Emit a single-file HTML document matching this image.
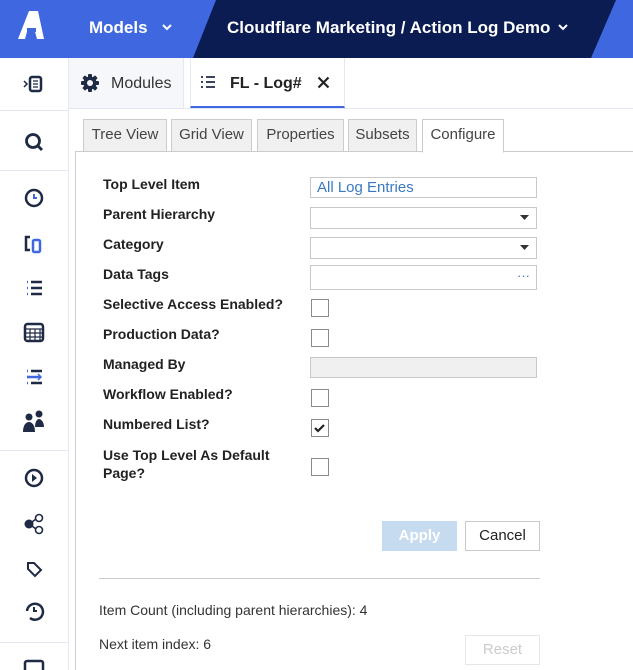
<!DOCTYPE html>
<html><head><style>
*{box-sizing:border-box;margin:0;padding:0}
body{width:633px;height:670px;overflow:hidden;background:#fff;font-family:"Liberation Sans",Arial,sans-serif;position:relative}
.abs{position:absolute}
.hdr{left:0;top:0;width:633px;height:58px;background:#3f68e0}
.lbl{position:absolute;left:103px;font-weight:bold;font-size:14px;color:#222}
.inp{position:absolute;left:310px;width:227px;height:22px;border:1px solid #c8c8c8;background:#fff}
.cb{position:absolute;left:311px;width:18px;height:18px;border:1px solid #8a8a8a;background:#fff}
.sep{position:absolute;left:0;width:68px;height:1px;background:#e3e8f3}
.tab{position:absolute;top:119px;height:33px;border:1px solid #ccc;background:#f0f0f0;font-size:15px;color:#444;text-align:center;line-height:30px}
</style></head><body>
<div class="abs hdr"></div>
<svg class="abs" style="left:0;top:0" width="633" height="58"><polygon points="216,0 616,0 591,58 193,58" fill="#0b1c52"/><polygon points="18,39 29,11 38,11 44,39 37,39 34,28 28,28 25,39" fill="#fff"/><rect x="27" y="28" width="9" height="4" fill="#3f68e0"/></svg>
<div class="abs" style="left:89px;top:18px;color:#fff;font-size:17px;font-weight:bold">Models</div>
<svg class="abs" style="left:161px;top:22px" width="12" height="10"><path d="M2 3l4 4 4-4" stroke="#fff" stroke-width="2" fill="none"/></svg>
<div class="abs" style="left:227px;top:18px;color:#fff;font-size:17px;font-weight:bold">Cloudflare Marketing / Action Log Demo</div>
<svg class="abs" style="left:557px;top:22px" width="12" height="10"><path d="M2 3l4 4 4-4" stroke="#fff" stroke-width="2" fill="none"/></svg>

<!-- sidebar -->
<div class="abs" style="left:68px;top:58px;width:1px;height:612px;background:#e3e8f3"></div>
<div class="sep" style="top:110px"></div><div class="sep" style="top:170px"></div><div class="sep" style="top:450px"></div><div class="sep" style="top:642px"></div>
<svg class="abs" style="left:0;top:58px" width="68" height="612" fill="none" stroke="#1f2a44" stroke-width="2.5">
<path d="M24 23l3 3-3 3" stroke-width="1.5"/><rect x="30" y="19" width="11" height="14" rx="2"/><path d="M33 23h5M33 26h5M33 29h5" stroke-width="1.3"/>
<circle cx="33" cy="83" r="6.5" stroke-width="2.8"/><path d="M38 88l4 4" stroke-width="2.8"/>
<circle cx="34" cy="140" r="8"/><path d="M34 136v4h3" stroke="#3f68e0" stroke-width="2"/>
<path d="M30 179h-4v13h4" /><rect x="33" y="182" width="7" height="12" rx="1.5" stroke="#3f68e0"/>
<path d="M27 224h1M27 230h1M27 236h1" stroke="#3f68e0"/><path d="M31 224h11M31 230h11M31 236h11"/>
<rect x="25" y="266" width="18" height="17" rx="2.5"/><path d="M25 271h18M30 271v12M35 271v12M40 271v12M25 275h18M25 279h18" stroke-width="1.2"/>
<path d="M27 313h1M27 319h1M27 325h1" stroke="#3f68e0"/><path d="M31 313h11M31 325h11"/><path d="M27 319h14" stroke="#3f68e0"/><path d="M38 316l3 3-3 3" stroke="#3f68e0" stroke-width="1.5"/>
<circle cx="29" cy="359" r="3.5" fill="#1f2a44" stroke="none"/><path d="M23 374c0-7 3-10 6-10s6 3 6 10z" fill="#1f2a44" stroke="none"/>
<circle cx="39" cy="356" r="3.5" fill="#1f2a44" stroke="none"/><path d="M35 369c0-5 2-8 4-8s5 3 5 8z" fill="#1f2a44" stroke="none"/>
<circle cx="34" cy="420" r="8"/><path d="M32 416v8l5-4z" fill="#1f2a44" stroke="none"/>
<circle cx="29" cy="466" r="4.5" fill="#1f2a44" stroke="none"/><circle cx="39" cy="460" r="3.5" stroke-width="1.6"/><circle cx="39" cy="472" r="3.5" stroke-width="1.6"/><path d="M32 464l4-3M32 468l4 3" stroke-width="1.6"/>
<path d="M28 505h6l7 7-6 6-7-7z" stroke-width="2"/>
<path d="M27 553a8 8 0 1 1 3 7" /><path d="M34 549v4h3" stroke-width="2"/>
<rect x="25" y="603" width="18" height="12" rx="2"/>
</svg>

<!-- top tabs -->
<div class="abs" style="left:69px;top:58px;width:115px;height:50px;background:#f5f7fb;border-right:1px solid #e3e8f3"></div>
<svg class="abs" style="left:80px;top:73px" width="20" height="20"><g fill="#1f2a44"><rect x="8" y="1" width="4" height="18" rx="1"/><rect x="8" y="1" width="4" height="18" rx="1" transform="rotate(45 10 10)"/><rect x="8" y="1" width="4" height="18" rx="1" transform="rotate(90 10 10)"/><rect x="8" y="1" width="4" height="18" rx="1" transform="rotate(135 10 10)"/><circle cx="10" cy="10" r="6.5"/></g><circle cx="10" cy="10" r="3" fill="#f5f7fb"/></svg>
<div class="abs" style="left:111px;top:75px;font-size:16px;color:#333">Modules</div>
<div class="abs" style="left:190px;top:58px;width:155px;height:50px;border-left:1px solid #e3e8f3;border-right:1px solid #e3e8f3;border-bottom:2px solid #3f68e0"></div>
<svg class="abs" style="left:200px;top:75px" width="16" height="14" stroke="#1f2a44" stroke-width="1.8"><path d="M1 2h2M1 7h2M1 12h2M6 2h9M6 7h9M6 12h9"/></svg>
<div class="abs" style="left:230px;top:75px;font-size:16px;color:#222;font-weight:bold">FL - Log#</div>
<svg class="abs" style="left:317px;top:76px" width="13" height="13"><path d="M1.5 1.5l10 10M11.5 1.5l-10 10" stroke="#222" stroke-width="2.2"/></svg>
<div class="abs" style="left:69px;top:108px;width:564px;height:1px;background:#e3e8f3"></div>

<!-- sub tabs -->
<div class="abs" style="left:75px;top:151px;width:558px;height:1px;background:#ccc"></div>
<div class="abs" style="left:75px;top:151px;width:1px;height:519px;background:#ccc"></div>
<div class="tab" style="left:83px;width:84px">Tree View</div>
<div class="tab" style="left:171px;width:81px">Grid View</div>
<div class="tab" style="left:257px;width:87px">Properties</div>
<div class="tab" style="left:348px;width:69px">Subsets</div>
<div class="tab" style="left:422px;width:82px;background:#fff;border-bottom:1px solid #fff;height:34px">Configure</div>

<!-- form -->
<div class="lbl" style="top:176px">Top Level Item</div>
<div class="inp" style="top:177px;height:21px;color:#3a78c2;font-size:15px;padding-left:6px;line-height:20px">All Log Entries</div>
<div class="lbl" style="top:206px">Parent Hierarchy</div>
<div class="inp" style="top:207px"></div><svg class="abs" style="left:520px;top:215px" width="9" height="6"><path d="M0 0h9L4.5 5z" fill="#333"/></svg>
<div class="lbl" style="top:236px">Category</div>
<div class="inp" style="top:237px"></div><svg class="abs" style="left:520px;top:245px" width="9" height="6"><path d="M0 0h9L4.5 5z" fill="#333"/></svg>
<div class="lbl" style="top:266px">Data Tags</div>
<div class="inp" style="top:265px;height:25px"></div><div class="abs" style="left:517px;top:268px;color:#3a78c2;font-size:13px">···</div>
<div class="lbl" style="top:296px">Selective Access Enabled?</div><div class="cb" style="top:299px"></div>
<div class="lbl" style="top:326px">Production Data?</div><div class="cb" style="top:329px"></div>
<div class="lbl" style="top:356px">Managed By</div>
<div class="inp" style="top:357px;height:21px;background:#f0f0f0"></div>
<div class="lbl" style="top:386px">Workflow Enabled?</div><div class="cb" style="top:389px"></div>
<div class="lbl" style="top:416px">Numbered List?</div><div class="cb" style="top:419px"><svg width="16" height="16" style="position:absolute;left:0;top:0"><path d="M3 8l3 3 6-6" stroke="#222" stroke-width="2.2" fill="none"/></svg></div>
<div class="lbl" style="top:446px;line-height:18px">Use Top Level As Default<br>Page?</div><div class="cb" style="top:458px"></div>

<div class="abs" style="left:382px;top:521px;width:75px;height:30px;background:#c6dbef;color:#fff;font-size:15px;font-weight:bold;text-align:center;line-height:30px">Apply</div>
<div class="abs" style="left:465px;top:521px;width:75px;height:30px;border:1px solid #c8c8c8;color:#222;font-size:15px;text-align:center;line-height:28px">Cancel</div>
<div class="abs" style="left:99px;top:578px;width:441px;height:1px;background:#ccc"></div>
<div class="abs" style="left:99px;top:602px;font-size:14px;color:#333">Item Count (including parent hierarchies): 4</div>
<div class="abs" style="left:99px;top:636px;font-size:14px;color:#333">Next item index: 6</div>
<div class="abs" style="left:465px;top:635px;width:75px;height:30px;border:1px solid #e6e6e6;color:#ccc;font-size:15px;text-align:center;line-height:28px">Reset</div>
</body></html>
